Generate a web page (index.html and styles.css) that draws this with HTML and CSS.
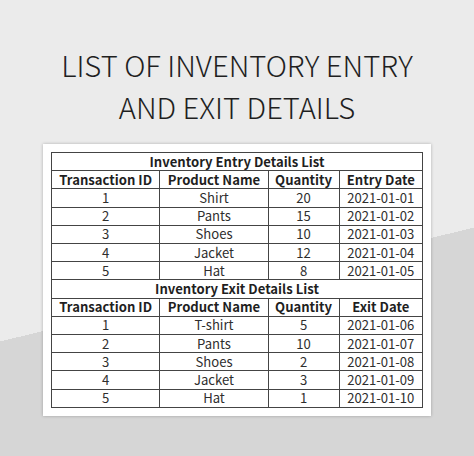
FILE: index.html
```html
<!DOCTYPE html>
<html lang="en">
<head>
<meta charset="utf-8">
<title>List of Inventory Entry and Exit Details</title>
<link rel="stylesheet" href="styles.css">
</head>
<body>
<main class="page">
  <h1 class="title">LIST OF INVENTORY ENTRY<br>AND EXIT DETAILS</h1>
  <div class="card">
    <table class="sheet">
      <colgroup>
        <col class="c-id"><col class="c-name"><col class="c-qty"><col class="c-date">
      </colgroup>
      <tr><th class="section" colspan="4">Inventory Entry Details List</th></tr>
      <tr class="head"><th>Transaction ID</th><th>Product Name</th><th>Quantity</th><th>Entry Date</th></tr>
      <tr><td>1</td><td>Shirt</td><td>20</td><td>2021-01-01</td></tr>
      <tr><td>2</td><td>Pants</td><td>15</td><td>2021-01-02</td></tr>
      <tr><td>3</td><td>Shoes</td><td>10</td><td>2021-01-03</td></tr>
      <tr><td>4</td><td>Jacket</td><td>12</td><td>2021-01-04</td></tr>
      <tr><td>5</td><td>Hat</td><td>8</td><td>2021-01-05</td></tr>
      <tr><th class="section" colspan="4">Inventory Exit Details List</th></tr>
      <tr class="head"><th>Transaction ID</th><th>Product Name</th><th>Quantity</th><th>Exit Date</th></tr>
      <tr><td>1</td><td>T-shirt</td><td>5</td><td>2021-01-06</td></tr>
      <tr><td>2</td><td>Pants</td><td>10</td><td>2021-01-07</td></tr>
      <tr><td>3</td><td>Shoes</td><td>2</td><td>2021-01-08</td></tr>
      <tr><td>4</td><td>Jacket</td><td>3</td><td>2021-01-09</td></tr>
      <tr><td>5</td><td>Hat</td><td>1</td><td>2021-01-10</td></tr>
    </table>
  </div>
</main>
</body>
</html>
```

FILE: styles.css
```css
html, body {
  margin: 0;
  padding: 0;
}

body {
  width: 474px;
  height: 456px;
  overflow: hidden;
  background: linear-gradient(166.5deg, #ebebeb 332px, #d6d6d6 332px);
  font-family: "Noto Sans CJK SC", "Noto Sans", sans-serif;
  color: #222;
}

.page {
  display: flex;
  flex-direction: column;
  align-items: center;
  padding-top: 43px;
}

.title {
  margin: 0;
  font-size: 29.2px;
  font-weight: 300;
  line-height: 42px;
  text-align: center;
  color: #1f1f1f;
}

.card {
  margin-top: 17px;
  width: 388px;
  box-sizing: border-box;
  padding: 8px;
  background: #fff;
  box-shadow: 0 0 3px rgba(0, 0, 0, 0.25);
}

.sheet {
  width: 100%;
  height: 256px;
  border-collapse: collapse;
  table-layout: fixed;
}

.c-id, .c-name { width: 29.2%; }
.c-qty { width: 19.1%; }
.c-date { width: 22.5%; }

.sheet th,
.sheet td {
  border: 1px solid #444;
  padding: 0;
  height: 17px;
  font-size: 13.1px;
  line-height: 16px;
  text-align: center;
  white-space: nowrap;
}

.sheet th {
  font-weight: 700;
  color: #1f1f1f;
}

.sheet td {
  font-weight: 400;
  color: #2e2e2e;
}
```
